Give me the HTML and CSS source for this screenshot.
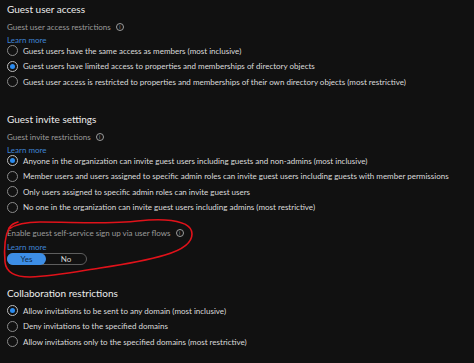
FILE: index.html
```html
<!DOCTYPE html>
<html>
<head>
<meta charset="utf-8">
<link rel="stylesheet" href="styles.css">
</head>
<body>
<div class="page">
  <section class="sec first">
    <h2 class="heading">Guest user access</h2>
    <div class="label">Guest user access restrictions <span class="info">i</span></div>
    <a class="learn">Learn more</a>
    <div class="options">
      <div class="opt"><span class="radio"></span>Guest users have the same access as members (most inclusive)</div>
      <div class="opt"><span class="radio on"></span>Guest users have limited access to properties and memberships of directory objects</div>
      <div class="opt"><span class="radio"></span>Guest user access is restricted to properties and memberships of their own directory objects (most restrictive)</div>
    </div>
  </section>

  <section class="sec second">
    <h2 class="heading">Guest invite settings</h2>
    <div class="label">Guest invite restrictions <span class="info">i</span></div>
    <a class="learn">Learn more</a>
    <div class="options">
      <div class="opt"><span class="radio on"></span>Anyone in the organization can invite guest users including guests and non-admins (most inclusive)</div>
      <div class="opt"><span class="radio"></span>Member users and users assigned to specific admin roles can invite guest users including guests with member permissions</div>
      <div class="opt"><span class="radio"></span>Only users assigned to specific admin roles can invite guest users</div>
      <div class="opt"><span class="radio"></span>No one in the organization can invite guest users including admins (most restrictive)</div>
    </div>
    <div class="label selfservice">Enable guest self-service sign up via user flows <span class="info">i</span></div>
    <a class="learn lm2">Learn more</a>
    <div class="toggle">
      <span class="tg yes">Yes</span>
      <span class="tg no">No</span>
    </div>
  </section>

  <section class="sec third">
    <h2 class="heading">Collaboration restrictions</h2>
    <div class="options collab">
      <div class="opt"><span class="radio on"></span>Allow invitations to be sent to any domain (most inclusive)</div>
      <div class="opt"><span class="radio"></span>Deny invitations to the specified domains</div>
      <div class="opt"><span class="radio"></span>Allow invitations only to the specified domains (most restrictive)</div>
    </div>
  </section>

  <svg class="scribble" width="474" height="363" viewBox="0 0 474 363">
    <path d="M9 229 C 16 224, 26 222, 40 222 C 70 222, 100 224, 125 222 C 140 221, 150 219, 165 220 C 181 221, 192 225, 192 234 C 192 243, 182 250, 165 255 C 145 261, 120 265, 100 268 C 80 271, 55 276, 30 277 C 15 277, 6 272, 5 262 C 4 250, 4 238, 9 228 C 11 225, 14 223, 18 222" fill="none" stroke="#e0121a" stroke-width="1.6" stroke-linecap="round"/>
  </svg>
</div>
</body>
</html>
```

FILE: styles.css
```css
html, body {
  margin: 0;
  padding: 0;
  background: #111111;
}
body {
  width: 474px;
  height: 363px;
  overflow: hidden;
  font-family: Lato, "Open Sans", sans-serif;
  color: #dedede;
}
.page {
  position: relative;
  width: 474px;
  height: 363px;
  padding: 2px 0 0 7px;
  box-sizing: border-box;
}
.sec {
  display: flex;
  flex-direction: column;
  align-items: flex-start;
}
.heading {
  margin: 0;
  font-size: 10px;
  font-weight: 400;
  line-height: 14px;
  color: #ececec;
  white-space: nowrap;
}
.label {
  margin-top: 5px;
  font-size: 8px;
  line-height: 12px;
  color: #9c9c9c;
  display: flex;
  align-items: center;
  white-space: nowrap;
}
.info {
  display: inline-flex;
  align-items: center;
  justify-content: center;
  width: 6px;
  height: 6px;
  margin-left: 5px;
  border: 1px solid #9c9c9c;
  border-radius: 50%;
  font-size: 5px;
  line-height: 6px;
  color: #9c9c9c;
}
.learn {
  margin-top: 2px;
  font-size: 8px;
  line-height: 10px;
  color: #3f84d4;
  white-space: nowrap;
}
.options {
  margin-top: -2px;
  display: flex;
  flex-direction: column;
}
.opt {
  height: 15.5px;
  display: flex;
  align-items: center;
  font-size: 8px;
  color: #dcdcdc;
  white-space: nowrap;
}
.radio {
  width: 9px;
  height: 9px;
  margin-right: 5px;
  border: 1px solid #8a8a8a;
  border-radius: 50%;
  flex: none;
  display: flex;
  align-items: center;
  justify-content: center;
}
.radio.on {
  border-color: #bdbdbd;
}
.radio.on::after {
  content: "";
  width: 5px;
  height: 5px;
  border-radius: 50%;
  background: #2b8cf0;
}
.second {
  margin-top: 22.5px;
}
.selfservice {
  margin-top: 12px;
}
.lm2 {
  margin-top: 3px;
}
.toggle {
  margin-top: 1px;
  width: 80px;
  height: 12px;
  box-sizing: border-box;
  border: 1px solid #5e5e5e;
  border-radius: 6px;
  display: flex;
  align-items: stretch;
  padding: 0;
}
.tg {
  display: flex;
  align-items: center;
  justify-content: center;
  font-size: 8px;
}
.tg.yes {
  width: 39px;
  margin: -1px 0 -1px -1px;
  background: #3d8ee6;
  border-radius: 6px;
  color: #0e2742;
}
.tg.no {
  flex: 1;
  color: #d4d4d4;
}
.third {
  margin-top: 21px;
}
.collab {
  margin-top: 3px;
}
.scribble {
  position: absolute;
  top: 0;
  left: 0;
  pointer-events: none;
}
```
